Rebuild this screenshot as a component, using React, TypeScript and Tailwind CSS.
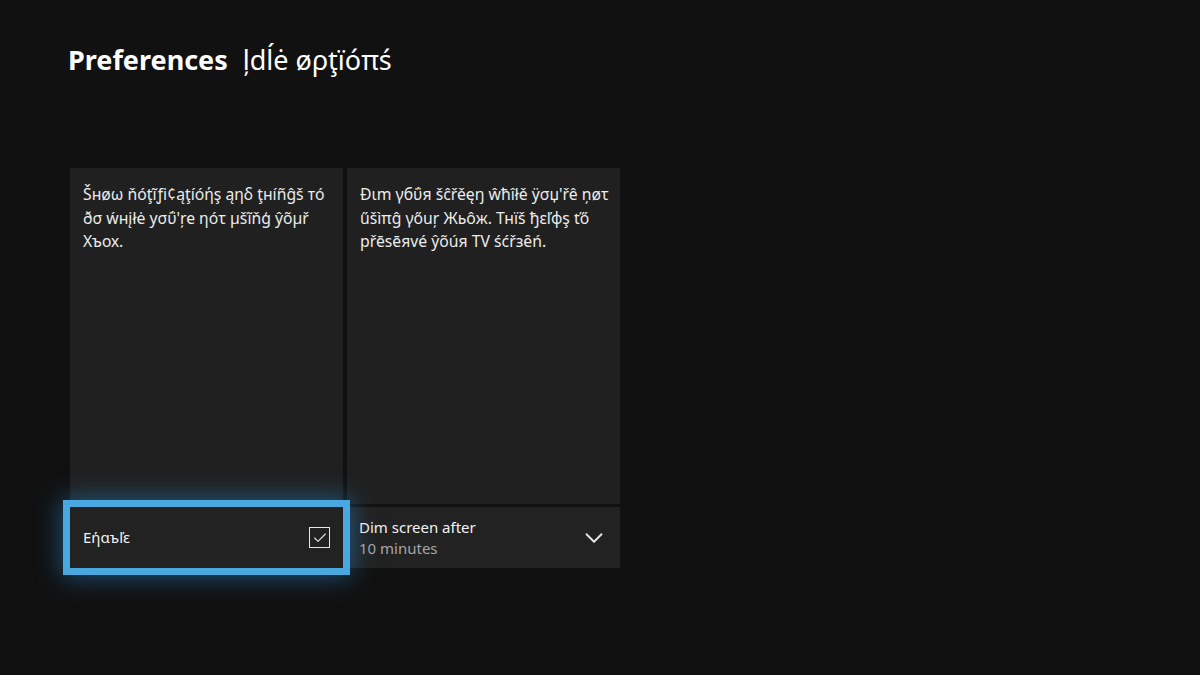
import { Check, ChevronDown } from "lucide-react";

const FONT = { fontFamily: '"Noto Sans", "DejaVu Sans", sans-serif' };

export default function App() {
  return (
    <div className="min-h-[675px] w-full bg-[#111111] text-white" style={FONT}>
      <h1 className="flex items-baseline gap-[15px] pl-[68px] pt-[42px] text-[27px] leading-[36px]">
        <span className="font-bold">Preferences</span>
        <span className="font-normal">ļdĺė øρţïóπś</span>
      </h1>

      <div className="ml-[70px] mt-[90px] grid w-[550px] grid-cols-[273px_273px] grid-rows-[336px_61px] gap-x-[4px] gap-y-[3px]">
        <div className="bg-[#202020] pl-[13px] pr-[6px] pt-[15px] text-[15.75px] leading-[23.5px] text-[#ececec]">
          Šнøω ňóţĩƒі¢ąţíóήş ąηδ ţнíñĝš тó ðσ ẃнįłė yσΰ'ŗe ηóτ µšĩňģ ŷõµř Хъох.
        </div>
        <div className="bg-[#202020] pl-[13px] pr-[6px] pt-[15px] text-[15.75px] leading-[23.5px] text-[#ececec]">
          Ðιm γбΰя šĉřěęŋ ŵћîłě ÿσџ'řê ņøτ űšìπĝ γőuŗ Жьôж. Тнïš ђεľφş ťő přēsēяvé ŷõúя TV śćřзȇń.
        </div>

        {/* focused toggle */}
        <div className="relative z-10 flex items-center justify-between bg-[#222222] pl-[13px] pr-[13px] shadow-[0_0_24px_8px_rgba(40,150,230,0.5)] ring-[7px] ring-[#4aa8e0]">
          <span className="text-[15px] text-[#f2f2f2]">Eήαъľε</span>
          <span className="flex h-[21px] w-[21px] items-center justify-center border-[1.5px] border-[#e6e6e6]">
            <Check className="h-[16px] w-[16px] text-[#e6e6e6]" strokeWidth={1.6} />
          </span>
        </div>

        <div className="flex items-center justify-between bg-[#222222] pl-[12px] pr-[11px]">
          <div className="flex flex-col leading-[21px]">
            <span className="text-[15px] text-[#f2f2f2]">Dim screen after</span>
            <span className="text-[15px] text-[#a6a6a6]">10 minutes</span>
          </div>
          <ChevronDown className="h-[30px] w-[30px] text-[#e6e6e6]" strokeWidth={1.5} />
        </div>
      </div>
    </div>
  );
}
